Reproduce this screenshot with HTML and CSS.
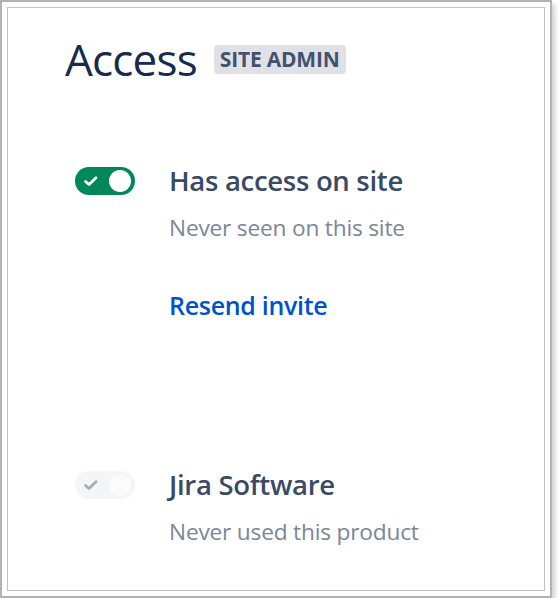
FILE: index.html
```html
<!DOCTYPE html>
<html>
<head>
<meta charset="utf-8">
<link rel="stylesheet" href="styles.css">
</head>
<body>
<div class="shell">
  <div class="panel">
    <div class="header">
      <h1 class="title">Access</h1>
      <span class="badge">SITE ADMIN</span>
    </div>
    <div class="row row-site">
      <div class="toggle on">
        <svg class="check" viewBox="0 0 18 18" width="18" height="18"><path d="M3.5 9.5 L7 12.5 L14 5.8" fill="none" stroke="#fff" stroke-width="2.8" stroke-linecap="round" stroke-linejoin="round"/></svg>
        <span class="knob"></span>
      </div>
      <div class="info">
        <div class="name">Has access on site</div>
        <div class="sub">Never seen on this site</div>
        <a class="link" href="#">Resend invite</a>
      </div>
    </div>
    <div class="row row-product">
      <div class="toggle disabled">
        <svg class="check" viewBox="0 0 18 18" width="18" height="18"><path d="M3.5 9.5 L7 12.5 L14 5.8" fill="none" stroke="#a5adba" stroke-width="2.8" stroke-linecap="round" stroke-linejoin="round"/></svg>
        <span class="knob"></span>
      </div>
      <div class="info">
        <div class="name">Jira Software</div>
        <div class="sub">Never used this product</div>
      </div>
    </div>
  </div>
</div>
</body>
</html>
```

FILE: styles.css
```css
html, body {
  margin: 0;
  padding: 0;
  background: #ffffff;
}
body {
  font-family: "Open Sans", "Noto Sans", "Liberation Sans", sans-serif;
}
.shell {
  width: 552px;
  height: 598px;
  box-sizing: border-box;
  border: 2px solid #b3b3b3;
  padding: 5px;
  background: #fff;
  box-shadow: 3px 4px 5px rgba(0, 0, 0, 0.18);
}
.panel {
  height: 100%;
  box-sizing: border-box;
  border: 1px solid #c2c2c2;
  padding: 21px 0 0 57px;
}
.header {
  display: flex;
  align-items: center;
  gap: 17px;
}
.title {
  margin: 0;
  font-size: 44px;
  font-weight: 500;
  color: #172b4d;
  letter-spacing: -0.8px;
  line-height: 60px;
}
.badge {
  background: #dfe1e6;
  color: #42526e;
  font-weight: 700;
  font-size: 21px;
  line-height: 29px;
  padding: 0 6px;
  border-radius: 4px;
  letter-spacing: -0.2px;
}
.row {
  display: flex;
  align-items: flex-start;
  gap: 34px;
  padding-left: 10px;
}
.row-site {
  margin-top: 74px;
}
.row-product {
  margin-top: 145px;
}
.toggle {
  position: relative;
  width: 60px;
  height: 28px;
  border-radius: 14px;
  flex: none;
  margin-top: 4px;
}
.toggle.on {
  background: #00875a;
}
.toggle.disabled {
  background: #f4f5f7;
}
.check {
  position: absolute;
  left: 7px;
  top: 5px;
}
.knob {
  position: absolute;
  right: 4px;
  top: 3px;
  width: 22px;
  height: 22px;
  border-radius: 50%;
  background: #fff;
}
.toggle.disabled .knob {
  background: #fbfbfc;
}
.info {
  display: flex;
  flex-direction: column;
}
.name {
  font-size: 27.5px;
  font-weight: 600;
  color: #3b4a64;
  line-height: 36px;
  letter-spacing: -0.3px;
}
.sub {
  font-size: 22.7px;
  color: #7a869a;
  line-height: 30px;
  margin-top: 14px;
  letter-spacing: -0.2px;
}
.link {
  font-size: 25px;
  font-weight: 600;
  color: #0052cc;
  text-decoration: none;
  line-height: 34px;
  margin-top: 45px;
  letter-spacing: -0.3px;
}
```
